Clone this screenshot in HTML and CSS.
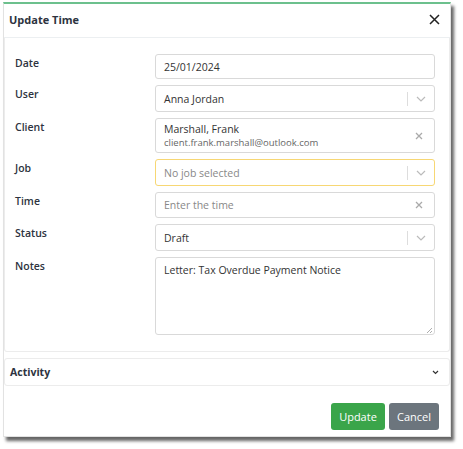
FILE: index.html
```html
<!DOCTYPE html>
<html lang="en">
<head>
    <meta charset="UTF-8">
    <meta name="viewport" content="width=device-width, initial-scale=1.0">
    <title>Update Time</title>
    <link rel="stylesheet" href="styles.css">
</head>
<body>

<div class="modal">
    <div class="modal-header">
        <h2>Update Time</h2>
        <span class="close">
            <svg width="11" height="11" viewBox="0 0 11 11"><path d="M1 1L10 10M10 1L1 10" stroke="#222" stroke-width="1.5"/></svg>
        </span>
    </div>

    <div class="panel">
        <div class="row">
            <label>Date</label>
            <div class="field field-date">25/01/2024</div>
        </div>
        <div class="row">
            <label>User</label>
            <div class="field field-select">
                <span class="value">Anna Jordan</span>
                <span class="sep"></span>
                <span class="chevron"><svg width="10" height="6" viewBox="0 0 10 6"><path d="M1 1L5 5L9 1" fill="none" stroke="#bbb" stroke-width="1.2"/></svg></span>
            </div>
        </div>
        <div class="row">
            <label>Client</label>
            <div class="field field-client">
                <div class="value">
                    <div>Marshall, Frank</div>
                    <div class="email">client.frank.marshall@outlook.com</div>
                </div>
                <span class="clear"><svg width="8" height="8" viewBox="0 0 8 8"><path d="M1 1L7 7M7 1L1 7" stroke="#aaa" stroke-width="1.3"/></svg></span>
            </div>
        </div>
        <div class="row">
            <label>Job</label>
            <div class="field field-select warn">
                <span class="value placeholder">No job selected</span>
                <span class="sep"></span>
                <span class="chevron"><svg width="10" height="6" viewBox="0 0 10 6"><path d="M1 1L5 5L9 1" fill="none" stroke="#bbb" stroke-width="1.2"/></svg></span>
            </div>
        </div>
        <div class="row">
            <label>Time</label>
            <div class="field field-time">
                <span class="value placeholder">Enter the time</span>
                <span class="clear"><svg width="8" height="8" viewBox="0 0 8 8"><path d="M1 1L7 7M7 1L1 7" stroke="#aaa" stroke-width="1.3"/></svg></span>
            </div>
        </div>
        <div class="row">
            <label>Status</label>
            <div class="field field-select">
                <span class="value">Draft</span>
                <span class="sep"></span>
                <span class="chevron"><svg width="10" height="6" viewBox="0 0 10 6"><path d="M1 1L5 5L9 1" fill="none" stroke="#bbb" stroke-width="1.2"/></svg></span>
            </div>
        </div>
        <div class="row">
            <label>Notes</label>
            <div class="field field-notes">
                Letter: Tax Overdue Payment Notice
                <span class="grip"><svg width="7" height="7" viewBox="0 0 7 7"><path d="M6 1L1 6M6 4L4 6" stroke="#999" stroke-width="0.8"/></svg></span>
            </div>
        </div>
    </div>

    <div class="activity">
        <span>Activity</span>
        <svg width="7" height="5" viewBox="0 0 7 5"><path d="M1 1L3.5 3.5L6 1" fill="none" stroke="#333" stroke-width="1.2"/></svg>
    </div>

    <div class="modal-footer">
        <button type="button" class="btn btn-update">Update</button>
        <button type="button" class="btn btn-cancel">Cancel</button>
    </div>
</div>

</body>
</html>
```

FILE: styles.css
```css
html, body {
    min-height: 100%;
}

body {
    font-family: 'Open Sans', sans-serif;
    font-size: 10.5px;
    color: #333;
    background-color: #fff;
    margin: 0;
    padding: 2px 0 12px 3px;
}

.modal {
    width: 446px;
    background-color: #fff;
    border: 1px solid #e2e2e2;
    border-top: 2px solid #6cc08d;
    box-shadow: 3px 4px 3px rgba(0, 0, 0, 0.6);
    padding-bottom: 6px;
}

.modal-header {
    height: 34px;
    display: flex;
    align-items: center;
    justify-content: space-between;
    padding: 0 10px 3px 5px;
    box-sizing: border-box;
    border-bottom: 1px solid #eceff1;
}

.modal-header h2 {
    margin: 0;
    font-size: 11px;
    font-weight: 700;
    color: #2d3340;
}

.close {
    display: flex;
}

.panel {
    border: 1px solid #ececec;
    border-top: none;
    border-radius: 0 0 3px 3px;
    padding: 16px 14px 16px 10px;
    display: flex;
    flex-direction: column;
    gap: 6px;
}

.row {
    display: flex;
}

.row label {
    width: 140px;
    flex-shrink: 0;
    font-weight: 600;
    color: #2d3340;
    padding-top: 2px;
}

.field {
    flex: 1;
    border: 1px solid #d9d9d9;
    border-radius: 3px;
    display: flex;
    align-items: center;
    padding: 0 8px;
    box-sizing: border-box;
}

.field-date {
    height: 25px;
}

.field-select {
    height: 27px;
    padding-right: 0;
}

.field-select .value {
    flex: 1;
}

.sep {
    width: 1px;
    height: 14px;
    background-color: #ddd;
}

.chevron {
    width: 26px;
    display: flex;
    justify-content: center;
}

.warn {
    border-color: #f7d774;
}

.placeholder {
    color: #888;
}

.field-client {
    height: 35px;
    padding-right: 11px;
}

.field-client .value {
    flex: 1;
    line-height: 14px;
}

.email {
    color: #666;
    font-size: 9.5px;
}

.field-time {
    height: 26px;
    padding-right: 11px;
}

.field-time .value {
    flex: 1;
}

.clear {
    display: flex;
}

.field-notes {
    height: 78px;
    align-items: flex-start;
    padding-top: 5px;
    position: relative;
}

.grip {
    position: absolute;
    right: 1px;
    bottom: 0;
    display: flex;
}

.activity {
    margin-top: 6px;
    height: 28px;
    border: 1px solid #ececec;
    border-radius: 3px;
    display: flex;
    align-items: center;
    justify-content: space-between;
    padding: 0 10px 0 5px;
    box-sizing: border-box;
    font-weight: 700;
    color: #2d3340;
}

.modal-footer {
    display: flex;
    justify-content: flex-end;
    gap: 4px;
    padding: 17px 11px 0 0;
}

.btn {
    font-family: 'Open Sans', sans-serif;
    font-size: 11px;
    color: #fff;
    border: none;
    border-radius: 3px;
    height: 27px;
    padding: 0 7px;
    cursor: pointer;
}

.btn-update {
    background-color: #3aa54a;
    width: 54px;
}

.btn-cancel {
    background-color: #6c757d;
    width: 50px;
}
```
